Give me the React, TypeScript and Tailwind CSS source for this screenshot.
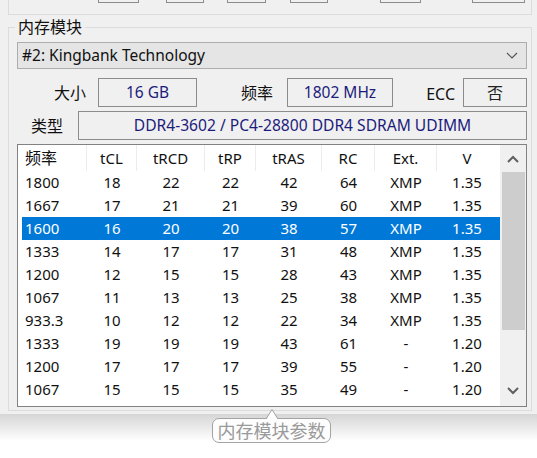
import React from 'react';

const cols = [
  { w: 'w-[65px]', align: 'text-left pl-[3px]' },
  { w: 'w-[50px]', align: 'text-center' },
  { w: 'w-[68px]', align: 'text-center' },
  { w: 'w-[51px]', align: 'text-center' },
  { w: 'w-[66px]', align: 'text-center' },
  { w: 'w-[53px]', align: 'text-center' },
  { w: 'w-[62px]', align: 'text-center' },
  { w: 'w-[60px]', align: 'text-center' },
];

const headers = ['频率', 'tCL', 'tRCD', 'tRP', 'tRAS', 'RC', 'Ext.', 'V'];

const rows: string[][] = [
  ['1800', '18', '22', '22', '42', '64', 'XMP', '1.35'],
  ['1667', '17', '21', '21', '39', '60', 'XMP', '1.35'],
  ['1600', '16', '20', '20', '38', '57', 'XMP', '1.35'],
  ['1333', '14', '17', '17', '31', '48', 'XMP', '1.35'],
  ['1200', '12', '15', '15', '28', '43', 'XMP', '1.35'],
  ['1067', '11', '13', '13', '25', '38', 'XMP', '1.35'],
  ['933.3', '10', '12', '12', '22', '34', 'XMP', '1.35'],
  ['1333', '19', '19', '19', '43', '61', '-', '1.20'],
  ['1200', '17', '17', '17', '39', '55', '-', '1.20'],
  ['1067', '15', '15', '15', '35', '49', '-', '1.20'],
];

const selected = 2;

const Chevron = ({ up, thick, className }: { up?: boolean; thick?: boolean; className?: string }) => (
  <svg width="12" height="8" viewBox="0 0 12 8" className={className}>
    <path
      d={up ? 'M1 7 L6 2 L11 7' : 'M1 1 L6 6 L11 1'}
      fill="none"
      stroke="currentColor"
      strokeWidth={thick ? 2 : 1.2}
    />
  </svg>
);

const ValueBox = ({ children, className }: { children: React.ReactNode; className: string }) => (
  <div
    className={`h-[29px] border border-[#8c8c8c] flex items-center justify-center ${className}`}>
    {children}
  </div>
);

export default function App() {
  return (
    <div className="relative w-[537px] h-[458px] overflow-hidden bg-white text-[15px] text-[#111] font-['Noto_Sans','Noto_Sans_CJK_SC',sans-serif]">
      <div className="bg-[#f0f0f0] h-[414px] flex flex-col">
        {/* previous group, only its lower edge is visible */}
        <div className="ml-[8px] mr-[5px] h-[15px] border-x border-b border-[#dcdcdc] flex items-start">
          <div className="ml-[89px] w-[41px] h-[3px] border-x border-b border-[#8c8c8c]" />
          <div className="ml-[27px] w-[38px] h-[3px] border-x border-b border-[#8c8c8c]" />
          <div className="ml-[23px] w-[39px] h-[3px] border-x border-b border-[#8c8c8c]" />
          <div className="ml-[24px] w-[38px] h-[3px] border-x border-b border-[#8c8c8c]" />
          <div className="ml-[52px] w-[41px] h-[3px] border-x border-b border-[#8c8c8c]" />
          <div className="ml-[51px] w-[53px] h-[3px] border-x border-b border-[#8c8c8c]" />
        </div>

        {/* 内存模块 group */}
        <div className="relative ml-[8px] mr-[5px] mt-[12px] border border-[#dcdcdc] pl-[8px] pr-[4px] pt-[14px] pb-[3px]">
          <span className="absolute left-[6px] top-[-12px] px-[3px] bg-[#f0f0f0] text-[16px] leading-[22px]">
            内存模块
          </span>

          <div className="h-[27px] border border-[#adadad] bg-[#e5e5e5] flex items-center justify-between pl-[4px] pr-[8px]">
            <span className="text-[15.5px]">#2: Kingbank Technology</span>
            <Chevron className="text-[#555]" />
          </div>

          <div className="mt-[9px] flex items-center">
            <div className="w-[81px] pr-[12px] text-right text-[16px]">大小</div>
            <ValueBox className="w-[99px] text-[15.5px] text-[#1c1c7c]">16 GB</ValueBox>
            <div className="w-[90px] pr-[14px] text-right text-[16px]">频率</div>
            <ValueBox className="w-[106px] text-[15.5px] text-[#1c1c7c]">1802 MHz</ValueBox>
            <div className="w-[70px] pr-[8px] text-right pt-[2px] text-[16px]">ECC</div>
            <ValueBox className="flex-1 text-[16px] text-[#222]">否</ValueBox>
          </div>

          <div className="mt-[4px] flex items-center">
            <div className="w-[61px] pr-[15px] text-right text-[16px]">类型</div>
            <ValueBox className="flex-1 text-[15.6px] text-[#1c1c7c]">
              DDR4-3602 / PC4-28800 DDR4 SDRAM UDIMM
            </ValueBox>
          </div>

          <div className="mt-[4px] h-[263px] border border-[#828282] bg-white flex">
            <div className="pl-[4px] flex-1">
              <div className="h-[26px] flex items-center">
                {headers.map((h, i) => (
                  <div
                    key={h}
                    className={`${cols[i].w} ${cols[i].align} h-full flex items-center ${
                      i === 0 ? 'justify-start' : 'justify-center'
                    } ${i < 7 ? 'border-r border-[#ececec]' : ''} ${i === 0 ? 'text-[16px]' : ''}`}>
                    {h}
                  </div>
                ))}
              </div>
              {rows.map((r, ri) => (
                <div
                  key={ri}
                  className={`h-[23px] flex items-center ${
                    ri === selected ? 'bg-[#0078d7] text-white' : ''
                  }`}>
                  {r.map((v, ci) => (
                    <div key={ci} className={`${cols[ci].w} ${cols[ci].align}`}>
                      {v}
                    </div>
                  ))}
                </div>
              ))}
            </div>

            {/* scrollbar */}
            <div className="w-[26px] bg-[#f0f0f0] flex flex-col items-center">
              <div className="h-[27px] flex items-center justify-center text-[#606060]">
                <Chevron up thick />
              </div>
              <div className="w-[23px] h-[158px] bg-[#cdcdcd]" />
              <div className="flex-1 flex items-end justify-center text-[#606060] pb-[11px]">
                <Chevron thick />
              </div>
            </div>
          </div>
        </div>
      </div>
      <div className="h-[27px] bg-gradient-to-b from-[#d6d6d6] to-white" />

      {/* tooltip */}
      <div className="absolute left-[212px] top-[418px] w-[119px] h-[25px] rounded-[7px] border border-[#a3a3a3] bg-[#fdfdfd] flex items-center justify-center text-[18px] text-[#9a9a9a] leading-none">
        内存模块参数
      </div>
      <svg className="absolute left-[265px] top-[408px]" width="14" height="12" viewBox="0 0 14 12">
        <path d="M1 11.5 L7 1.5 L13 11.5 Z" fill="#fdfdfd" />
        <path d="M1 11 L7 1.5 L13 11" fill="none" stroke="#a3a3a3" strokeWidth="1" />
      </svg>
    </div>
  );
}
